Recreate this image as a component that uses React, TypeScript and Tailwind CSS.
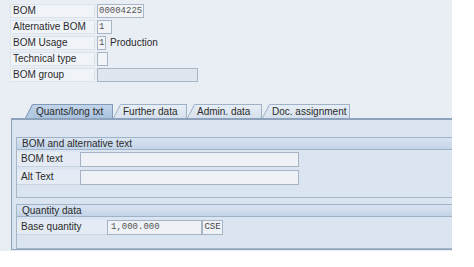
import React from "react";

const headerRows: { label: string; value?: string; width: number; extra?: string; disabled?: boolean }[] = [
  { label: "BOM", value: "00004225", width: 47 },
  { label: "Alternative BOM", value: "1", width: 15 },
  { label: "BOM Usage", value: "1", width: 9, extra: "Production" },
  { label: "Technical type", width: 11 },
  { label: "BOM group", width: 101, disabled: true },
];

const tabs = [
  { label: "Quants/long txt", width: 88, active: true },
  { label: "Further data", width: 74 },
  { label: "Admin. data", width: 75 },
  { label: "Doc. assignment", width: 88 },
];

function Tab({ label, width, active }: { label: string; width: number; active?: boolean }) {
  const fill = active ? "#b4cae3" : "#dde6f0";
  const stroke = active ? "#7f99b7" : "#9fb1c6";
  return (
    <div className="flex h-[14px]" style={{ width }}>
      <svg width="8" height="14" viewBox="0 0 8 14" className="shrink-0">
        <polygon points="0,14 7,0 8,0 8,14" fill={fill} />
        <line x1="0.5" y1="14" x2="7.5" y2="0.5" stroke={stroke} strokeWidth="1" />
      </svg>
      <div
        className={
          active
            ? "flex-1 flex items-center pl-[3px] bg-gradient-to-b from-[#c3d5ea] to-[#a9c2de] border-t border-r border-[#7f99b7]"
            : "flex-1 flex items-center pl-[2px] bg-gradient-to-b from-[#e8eef5] to-[#d5e0ec] border-t border-r border-[#9fb1c6]"
        }
      >
        {label}
      </div>
    </div>
  );
}

function GroupHeader({ title }: { title: string }) {
  return (
    <div className="h-[13px] flex items-center pl-[5px] bg-gradient-to-b from-[#d9e4f1] to-[#c3d4e8] border-t border-b border-[#9fb2c8]">
      {title}
    </div>
  );
}

export default function App() {
  return (
    <div className="w-[474px] h-[267px] bg-white font-['Liberation_Sans',Arial,sans-serif] text-[10px] leading-none text-[#2b2b2b]">
      <div className="w-[452px] h-[251px] bg-[#e9eef5] flex flex-col">
        {/* header fields */}
        <div className="flex flex-col gap-[2px] pt-[4px] pl-[10px]">
          {headerRows.map((r) => (
            <div key={r.label} className="flex items-center h-[14px] gap-[2px]">
              <div className="w-[85px] h-full flex items-center pl-[2px] bg-[#f0f3f8] border border-[#dde3eb]">
                {r.label}
              </div>
              <div
                className={
                  "h-full flex items-center pl-[1px] border border-[#a9b6c6] font-['Liberation_Mono',monospace] text-[9px] text-[#555] " +
                  (r.disabled ? "bg-[#dfe6ee]" : "bg-[#f2f4f7]")
                }
                style={{ width: r.width }}
              >
                {r.value}
              </div>
              {r.extra && <span className="ml-[2px]">{r.extra}</span>}
            </div>
          ))}
        </div>

        {/* tab strip */}
        <div className="flex mt-[22px] ml-[25px]">
          {tabs.map((t) => (
            <Tab key={t.label} {...t} />
          ))}
        </div>

        {/* tab panel */}
        <div className="ml-[11px] h-[132px] bg-[#dbe5f1] border-t-2 border-l border-b border-[#8ea3bb] pt-[17px] pl-[4px] flex flex-col">
          <div className="border-l border-b border-[#a7b7ca] pb-[12px]">
            <GroupHeader title="BOM and alternative text" />
            <div className="flex flex-col gap-[3px] pt-[2px]">
              {["BOM text", "Alt Text"].map((l) => (
                <div key={l} className="flex h-[15px]">
                  <div className="w-[63px] flex items-center pl-[4px] bg-[#e4ebf4] border-b border-[#c9d4e1]">
                    {l}
                  </div>
                  <div className="w-[219px] bg-[#eef2f7] border border-[#a6b3c4]" />
                </div>
              ))}
            </div>
          </div>

          <div className="mt-[6px] border-l border-b border-[#a7b7ca] pb-[13px]">
            <GroupHeader title="Quantity data" />
            <div className="flex h-[15px] mt-[3px]">
              <div className="w-[90px] flex items-center pl-[4px] bg-[#e4ebf4] border-b border-[#c9d4e1]">
                Base quantity
              </div>
              <div className="w-[95px] flex items-center pl-[3px] bg-[#eef2f7] border border-[#a6b3c4] font-['Liberation_Mono',monospace] text-[9px] text-[#555]">
                1,000.000
              </div>
              <div className="w-[21px] flex items-center justify-center bg-[#eef2f7] border border-[#a6b3c4] font-['Liberation_Mono',monospace] text-[9px] text-[#444]">
                CSE
              </div>
            </div>
          </div>
        </div>
      </div>
    </div>
  );
}
